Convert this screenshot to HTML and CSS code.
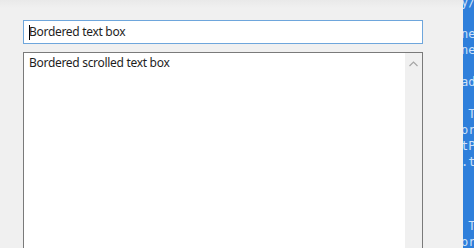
FILE: index.html
```html
<html lang="en">

<head>
    <meta charset="UTF-8">
    <title>Bordered text boxes</title>
    <link rel="stylesheet" href="styles.css">
</head>

<body>
    <main class="window">
        <div class="textbox">
            <span class="caret"></span>Bordered text box
        </div>

        <div class="scrollbox">
            <div class="scroll-content">Bordered scrolled text box</div>
            <div class="scrollbar">
                <svg class="arrow" width="9" height="6" viewBox="0 0 9 6">
                    <path d="M0.5 5 L4.5 1 L8.5 5" fill="none" stroke="#a6a6a6" stroke-width="1.2" />
                </svg>
            </div>
        </div>
    </main>

    <aside class="editor">
        <div class="line">y/</div>
        <div class="line"></div>
        <div class="line">ne</div>
        <div class="line">ne</div>
        <div class="line"></div>
        <div class="line">ad</div>
        <div class="line"></div>
        <div class="line">&nbsp;T</div>
        <div class="line">or</div>
        <div class="line">tP</div>
        <div class="line">.t</div>
        <div class="line"></div>
        <div class="line"></div>
        <div class="line"></div>
        <div class="line">&nbsp;T</div>
        <div class="line">or</div>
    </aside>
</body>

</html>
```

FILE: styles.css
```css
body {
    margin: 0;
    height: 248px;
    overflow: hidden;
    display: flex;
    background-color: #f0f0f0;
    font-family: 'Segoe UI', 'Noto Sans', sans-serif;
}

.window {
    width: 463px;
    padding: 20px 0 0 23px;
    box-sizing: border-box;
    background: linear-gradient(#e9e9e9, #f0f0f0 8px);
}

.textbox {
    width: 400px;
    height: 24px;
    box-sizing: border-box;
    border: 1px solid #6ea6dc;
    background-color: #fff;
    padding: 0 0 0 5px;
    font-size: 12px;
    letter-spacing: -0.3px;
    line-height: 22px;
    color: #1e1e1e;
    display: flex;
    align-items: center;
}

.caret {
    width: 1px;
    height: 15px;
    background-color: #000;
    margin-right: -1px;
}

.scrollbox {
    width: 400px;
    height: 220px;
    margin-top: 8px;
    box-sizing: border-box;
    border: 1px solid #7a7a7a;
    background-color: #fff;
    display: flex;
}

.scroll-content {
    flex: 1;
    padding: 2px 5px;
    font-size: 12px;
    letter-spacing: -0.3px;
    line-height: 16px;
    color: #1e1e1e;
}

.scrollbar {
    width: 17px;
    background-color: #f0f0f0;
    display: flex;
    justify-content: center;
    padding-top: 8px;
    box-sizing: border-box;
}

.arrow {
    display: block;
}

.editor {
    flex: 1;
    background-color: #2e7fdb;
    font-family: 'DejaVu Sans Mono', monospace;
    font-size: 12px;
    color: #cfe2f8;
    overflow: hidden;
    margin-top: -6px;
}

.line {
    height: 16px;
    line-height: 16px;
    white-space: nowrap;
    margin-left: -2px;
}
```
